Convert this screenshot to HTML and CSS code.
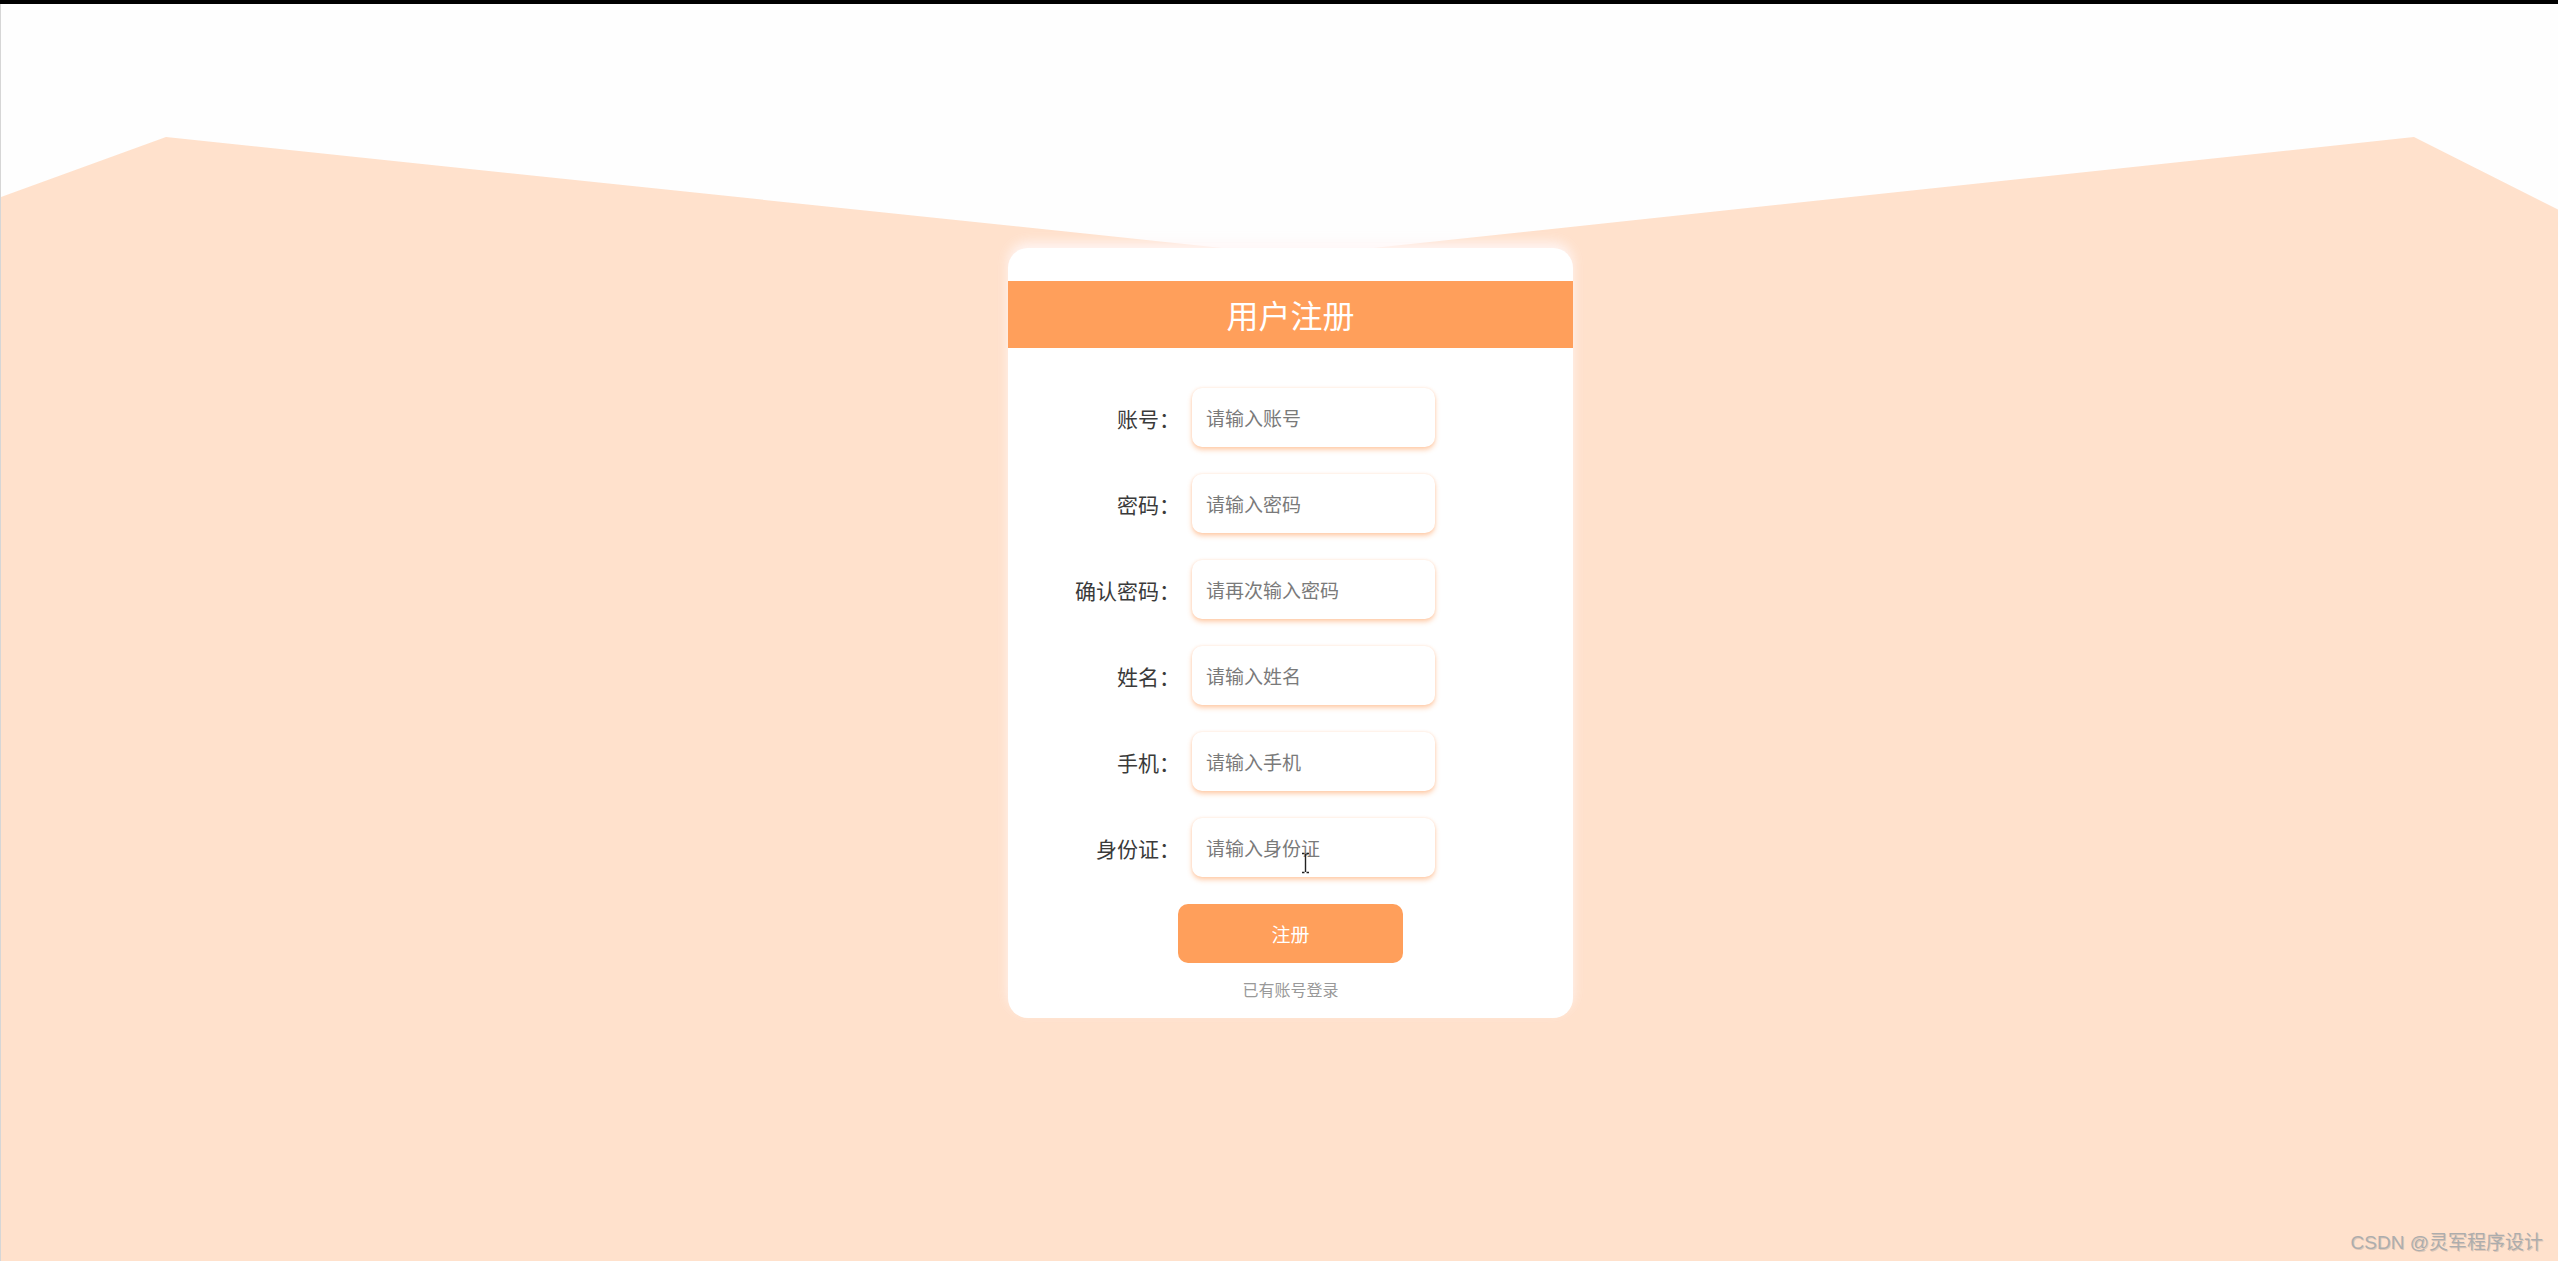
FILE: index.html
```html
<!DOCTYPE html>
<html lang="zh-CN">
<head>
<meta charset="utf-8">
<title>用户注册</title>
<link rel="stylesheet" href="styles.css">
</head>
<body>
<div class="topbar"></div>
<div class="page">
  <div class="bg"></div>
  <div class="card">
    <div class="card-head">用户注册</div>
    <form class="form">
      <div class="row"><label class="label">账号：</label><input class="field" type="text" placeholder="请输入账号"></div>
      <div class="row"><label class="label">密码：</label><input class="field" type="password" placeholder="请输入密码"></div>
      <div class="row"><label class="label">确认密码：</label><input class="field" type="password" placeholder="请再次输入密码"></div>
      <div class="row"><label class="label">姓名：</label><input class="field" type="text" placeholder="请输入姓名"></div>
      <div class="row"><label class="label">手机：</label><input class="field" type="text" placeholder="请输入手机"></div>
      <div class="row"><label class="label">身份证：</label><input class="field" type="text" placeholder="请输入身份证"></div>
      <button class="btn" type="button">注册</button>
      <div class="link">已有账号登录</div>
    </form>
  </div>
  <svg class="cursor" width="9" height="22" viewBox="0 0 9 22" aria-hidden="true">
    <path d="M1 1.5h2.5M5.5 1.5H8M4.5 2v18M1 20.5h2.5M5.5 20.5H8" stroke="#222" stroke-width="1.4" fill="none"/>
  </svg>
  <div class="watermark">CSDN @灵军程序设计</div>
</div>
</body>
</html>
```

FILE: styles.css
```css
* { box-sizing: border-box; }
html, body {
  margin: 0;
  padding: 0;
  height: 100%;
  overflow: hidden;
  background: #ffffff;
  font-family: "Noto Sans CJK SC", "Noto Sans", sans-serif;
}
.topbar {
  height: 4px;
  background: #000;
}
.page {
  position: relative;
  height: 1257px;
  border-left: 1px solid #d6d6d6;
  background: #fefefe;
  overflow: hidden;
}
.bg {
  position: absolute;
  inset: 0;
  background: #ffe1cc;
  clip-path: polygon(0 193px, 165px 133px, 1297px 252px, 2413px 133px, 2558px 206px, 2558px 1257px, 0 1257px);
}
.card {
  position: relative;
  width: 565px;
  margin: 244px 0 0 1007px;
  padding: 33px 0 18px;
  background: #fff;
  border-radius: 20px;
  box-shadow: 0 -6px 12px rgba(255, 246, 246, 0.9);
}
.card-head {
  height: 67px;
  line-height: 67px;
  background: #ff9f5b;
  color: #fff;
  font-size: 32px;
  text-align: center;
}
.form {
  margin: 40px 0 0;
  display: flex;
  flex-direction: column;
}
.row {
  display: flex;
  align-items: center;
  height: 59px;
  margin-bottom: 27px;
}
.label {
  width: 172px;
  text-align: right;
  font-size: 21px;
  color: #3a3a3a;
  margin-right: 12px;
  white-space: nowrap;
}
.field {
  width: 243px;
  height: 59px;
  border: none;
  outline: none;
  border-radius: 10px;
  padding: 0 14px;
  font-family: inherit;
  font-size: 19px;
  color: #333;
  background: #fff;
  box-shadow: 0 3px 5px rgba(255, 150, 80, 0.45), 0 0 3px rgba(255, 190, 150, 0.35);
}
.field::placeholder {
  color: #7a7a7a;
}
.btn {
  align-self: center;
  width: 225px;
  height: 59px;
  border: none;
  border-radius: 10px;
  background: #ff9f5b;
  color: #fff;
  font-family: inherit;
  font-size: 19px;
  cursor: pointer;
}
.link {
  margin-top: 15px;
  height: 22px;
  line-height: 22px;
  text-align: center;
  font-size: 16px;
  color: #999;
}
.cursor {
  position: absolute;
  left: 1300px;
  top: 848px;
}
.watermark {
  position: absolute;
  right: 15px;
  bottom: 7px;
  font-family: "Liberation Sans", "Noto Sans CJK SC", sans-serif;
  font-size: 19px;
  color: #adadad;
  text-shadow: 1px 1px 0 rgba(120, 120, 120, 0.25);
}
```
